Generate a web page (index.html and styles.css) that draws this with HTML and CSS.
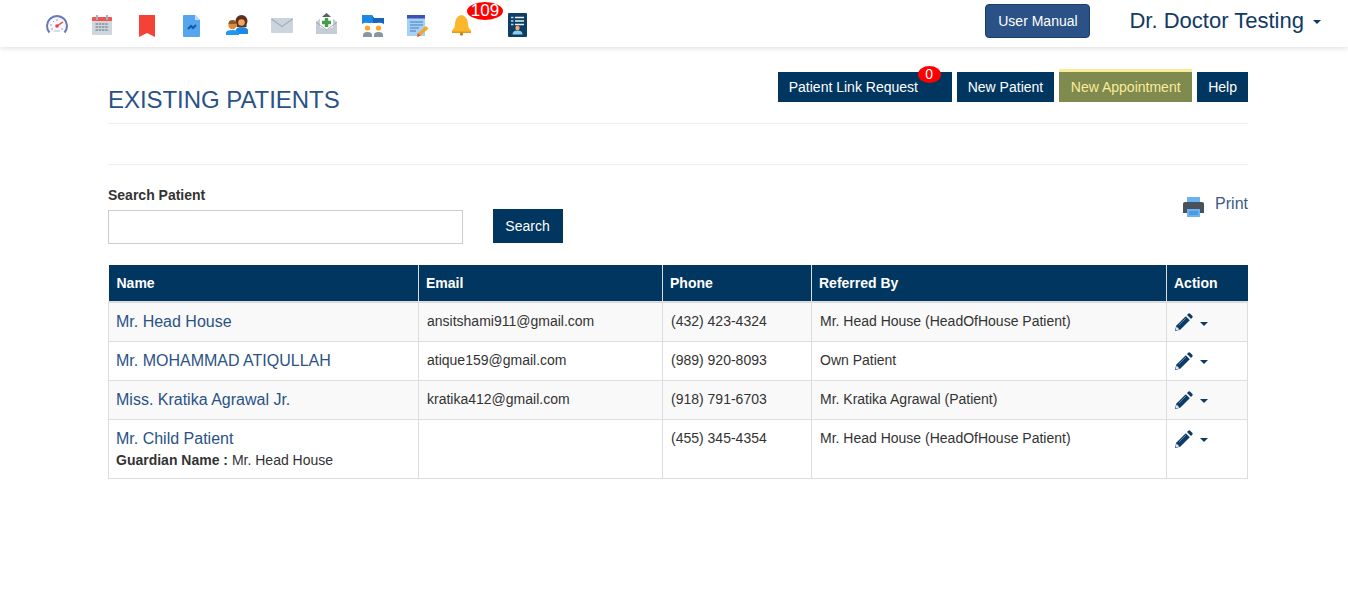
FILE: index.html
```html
<!DOCTYPE html>
<html lang="en">
<head>
<meta charset="utf-8">
<title>Existing Patients</title>
<link rel="stylesheet" href="styles.css">
</head>
<body>
<svg class="defs" width="0" height="0" aria-hidden="true">
  <symbol id="pen" viewBox="0 0 18 18">
    <path d="M0 18l1.200-5.200L10.800 3.200l4 4L5.200 16.800z" fill="#0d3a66"/>
    <path d="M1.500 13.500l3 3-3.800.8z" fill="#e8eef4"/>
    <path d="M3.800 12.200l7.400-7.400" stroke="#5f86aa" stroke-width="1" fill="none"/>
    <path d="M12 2l1.200-1.200q1-1 2 0l2 2q1 1 0 2L16 6z" fill="#0d3a66"/>
  </symbol>
</svg>
<header class="topbar">
  <nav class="icons">
    <a class="ic"><svg viewBox="0 0 24 24"><path d="M5 19a10 10 0 1 1 14 0z" fill="#f7f8fc"/><path d="M4.500 19.500a10 10 0 1 1 15 0" fill="none" stroke="#6a78b8" stroke-width="2"/><path d="M12 13l6-4" stroke="#e8404a" stroke-width="1.500"/><circle cx="12" cy="13" r="1.800" fill="#e8404a"/><path d="M6 16h2M16 16h2M5 12h2M12 6v2M8 8l1 1" stroke="#9aa3c4"/><path d="M9 18h6" stroke="#b8bfd6"/></svg></a>
    <a class="ic"><svg viewBox="0 0 24 24"><rect x="2" y="4" width="20" height="18" rx="1" fill="#cfd7de"/><path d="M2 5q0-1 1-1h18q1 0 1 1v3H2z" fill="#f0564e"/><rect x="6" y="2" width="2" height="5" fill="#a7b0b8"/><rect x="16" y="2" width="2" height="5" fill="#a7b0b8"/><path d="M5.500 11h13M5.500 14h13M5.500 17h13" stroke="#99a2ab" stroke-width="2" stroke-dasharray="2.500 .7"/></svg></a>
    <a class="ic"><svg viewBox="0 0 24 24"><path d="M4 2h16v22l-8-4-8 4z" fill="#f44336"/></svg></a>
    <a class="ic"><svg viewBox="0 0 24 24"><path d="M3 3q0-1 1-1h11l5 5v16q0 1-1 1H4q-1 0-1-1z" fill="#55a6ef"/><path d="M15 2l5 5h-5z" fill="#bbdefb"/><path d="M8 16l3-3 2 2 3-3" stroke="#1458b0" stroke-width="2" fill="none"/></svg></a>
    <a class="ic"><svg viewBox="0 0 24 24"><circle cx="16.500" cy="8" r="6" fill="#5d3020"/><path d="M11.500 14v-4h10v4z" fill="#5d3020"/><circle cx="16.500" cy="9.500" r="3.300" fill="#f2a65a"/><path d="M11 21v-4q0-3 5.500-3t6.500 3v4z" fill="#1e88e5"/><circle cx="7.500" cy="12" r="4.200" fill="#e08a3c"/><path d="M3.500 11q0-4 4-4t4 4z" fill="#8a5a2b"/><path d="M1 22v-2q0-3 6.500-3t6.500 3v2z" fill="#2196f3"/></svg></a>
    <a class="ic"><svg viewBox="0 0 24 24"><rect x="1" y="5" width="22" height="15" rx="1" fill="#ccd5dd"/><path d="M1.500 6l10.500 7.500L22.500 6" fill="none" stroke="#a3aeb8" stroke-width="1.300"/></svg></a>
    <a class="ic"><svg viewBox="0 0 24 24"><path d="M1 9l10.500-9L22 9v12H1z" fill="#c5ced6"/><path d="M5 4h13v10l-6.500 3L5 14z" fill="#fff"/><path d="M9.800 5h3.400v2.800H16v3.400h-2.800V14H9.800v-2.800H7V7.800h2.800z" fill="#43a047"/><path d="M1 9l10.500 8L22 9" fill="none" stroke="#8f9ba6" stroke-width=".8"/><path d="M11.500 0L7 4h9z" fill="#54626e"/></svg></a>
    <a class="ic"><svg viewBox="0 0 24 24"><path d="M2 2h10l2 3h10v8H2z" fill="#1e88e5"/><path d="M12 2l2 3h10v8H14z" fill="#1565c0"/><path d="M2 11q3-2 6-1h8q5-1 8 1v4H2z" fill="#fff"/><circle cx="7.500" cy="15" r="2.600" fill="#f9a825"/><circle cx="18.500" cy="15" r="2.600" fill="#f9a825"/><path d="M3 24v-2q0-3 4.500-3t4.500 3v2zM14 24v-2q0-3 4.500-3t4.500 3v2z" fill="#8497a3"/></svg></a>
    <a class="ic"><svg viewBox="0 0 24 24"><rect x="2" y="2" width="18" height="21" fill="#a4d2f7"/><rect x="2" y="2" width="18" height="3.500" fill="#3f51b5"/><path d="M5 9h13M5 12h13M5 15h9M5 18h6" stroke="#4a78bd"/><path d="M12 24l1-4 8-7 2.500 2.500-8 7z" fill="#f5a623"/><path d="M12 24l1-4 2.500 2.500z" fill="#e8504a"/></svg></a>
    <a class="ic bell"><svg viewBox="0 0 24 24"><path d="M11.500 2q5.500 1 6.300 7.500l.7 5 2.500 3V19H2v-1.500l2.500-3 .7-5Q6 3 11.500 2z" fill="#fbb72c"/><rect x="2" y="18.500" width="19" height="1.500" fill="#e59a1c"/><circle cx="11.500" cy="21" r="1.700" fill="#c9811a"/></svg><span class="bubble">109</span></a>
    <a class="ic last"><svg viewBox="0 0 24 24"><rect x="1" y="0" width="19" height="24" rx="1" fill="#0d3f66"/><path d="M8 4.500h9M8 8h9M8 11.500h9" stroke="#e9f1f6" stroke-width="1.500"/><path d="M4 4.500h2.500M4 8h2.500M4 11.500h2.500" stroke="#bcd8ea" stroke-width="1.500"/><circle cx="10.500" cy="15" r="2.200" fill="#f5a86a"/><path d="M5.500 21.500q0-4 5-4t5 4z" fill="#8ecbec"/></svg></a>
  </nav>
  <div class="top-right">
    <a class="manual">User Manual</a>
    <a class="user">Dr. Doctor Testing <span class="caret user-caret"></span></a>
  </div>
</header>

<main class="wrap">
  <div class="head">
    <h1>EXISTING PATIENTS</h1>
    <div class="actions">
      <a class="btn link-btn">Patient Link Request<span class="badge">0</span></a>
      <a class="btn">New Patient</a>
      <a class="btn appt">New Appointment</a>
      <a class="btn">Help</a>
    </div>
  </div>
  <div class="spacer"></div>

  <div class="tools">
    <div class="search-group">
      <label class="lbl" for="q">Search Patient</label>
      <input id="q" class="field" type="text">
    </div>
    <button class="search">Search</button>
    <a class="print">
      <svg viewBox="0 0 24 24" width="24" height="24"><rect x="5" y="1" width="13" height="7" fill="#6ab2f2"/><path d="M3 6h17q2 0 2 2v9H1V8q0-2 2-2z" fill="#47525c"/><rect x="5" y="13" width="13" height="8" fill="#6ab2f2"/><path d="M7 16h9M7 18h9" stroke="#2f7fd0"/></svg>
      <span>Print</span>
    </a>
  </div>

  <table class="grid">
    <colgroup><col class="c1"><col class="c2"><col class="c3"><col class="c4"><col class="c5"></colgroup>
    <thead><tr><th>Name</th><th>Email</th><th>Phone</th><th>Referred By</th><th>Action</th></tr></thead>
    <tbody>
      <tr class="odd"><td><a class="nm">Mr. Head House</a></td><td>ansitshami911@gmail.com</td><td>(432) 423-4324</td><td>Mr. Head House (HeadOfHouse Patient)</td><td><span class="act"><svg class="pen"><use href="#pen"/></svg><span class="caret"></span></span></td></tr>
      <tr><td><a class="nm">Mr. MOHAMMAD ATIQULLAH</a></td><td>atique159@gmail.com</td><td>(989) 920-8093</td><td>Own Patient</td><td><span class="act"><svg class="pen"><use href="#pen"/></svg><span class="caret"></span></span></td></tr>
      <tr class="odd"><td><a class="nm">Miss. Kratika Agrawal Jr.</a></td><td>kratika412@gmail.com</td><td>(918) 791-6703</td><td>Mr. Kratika Agrawal (Patient)</td><td><span class="act"><svg class="pen"><use href="#pen"/></svg><span class="caret"></span></span></td></tr>
      <tr><td><a class="nm">Mr. Child Patient</a><div class="guardian"><b>Guardian Name :</b> Mr. Head House</div></td><td></td><td>(455) 345-4354</td><td>Mr. Head House (HeadOfHouse Patient)</td><td><span class="act"><svg class="pen"><use href="#pen"/></svg><span class="caret"></span></span></td></tr>
    </tbody>
  </table>
</main>
</body>
</html>
```
FILE: styles.css
```css
* { box-sizing: border-box; }
html, body { margin: 0; padding: 0; }
body { font-family: "Liberation Sans", Arial, sans-serif; font-size: 14px; color: #333; background: #fff; height: 608px; overflow: hidden; }
.defs { display: block; height: 0; }

.topbar { height: 47px; display: flex; justify-content: space-between; align-items: center; padding: 0 27px 0 45px; background: #fff; box-shadow: 0 1px 6px rgba(0,0,0,.14); }
.icons { display: flex; gap: 21px; align-items: flex-start; height: 47px; padding-top: 13px; }
.ic { display: block; width: 24px; height: 24px; position: relative; }
.ic svg { display: block; width: 24px; height: 24px; }
.last { margin-left: 12px; }
.bubble { position: absolute; left: 17px; top: -11px; width: 36px; height: 18px; line-height: 18px; border-radius: 50%; background: #f00; color: #fff; font-size: 17px; text-align: center; }

.top-right { display: flex; align-items: center; gap: 39px; }
.manual { display: block; width: 105px; height: 34px; line-height: 32px; text-align: center; background: #2a5286; border: 1px solid #1b3d6b; border-radius: 4px; color: #fff; margin-top: -5px; }
.user { font-size: 22px; color: #123a63; margin-top: -5px; white-space: nowrap; }
.caret { display: inline-block; width: 0; height: 0; border-top: 4px solid #0d3a66; border-left: 4px solid transparent; border-right: 4px solid transparent; vertical-align: middle; }
.user-caret { margin-left: 3px; }

.wrap { width: 1140px; margin-left: 108px; }
.head { height: 77px; display: flex; justify-content: space-between; border-bottom: 1px solid #eee; }
h1 { margin: 39px 0 0; font-size: 24px; font-weight: 400; line-height: 28px; color: #2a5286; letter-spacing: -.05px; }
.actions { display: flex; gap: 5px; align-items: flex-start; padding-top: 25px; }
.btn { display: block; height: 30px; line-height: 30px; padding: 0 11px; background: #003660; color: #fff; position: relative; white-space: nowrap; }
.link-btn { width: 174px; }
.badge { position: absolute; left: 140px; top: -6px; width: 23px; height: 17px; line-height: 17px; border-radius: 50%; background: #f00; color: #fff; text-align: center; }
.appt { background: #7f8a4e; color: #fbeb9b; width: 133px; height: 33px; margin-top: -3px; border-top: 3px solid #fbeb9b; line-height: 30px; text-align: center; padding: 0; }
.spacer { height: 41px; border-bottom: 1px solid #eee; }

.tools { display: flex; height: 100px; align-items: flex-start; position: relative; }
.search-group { width: 355px; padding-top: 22px; }
.lbl { display: block; font-weight: 700; height: 23px; line-height: 17px; color: #333; }
.field { display: block; width: 355px; height: 34px; border: 1px solid #ccc; background: #fff; }
.search { width: 70px; height: 34px; margin: 44px 0 0 30px; padding: 0 1px 0 0; background: #003660; color: #fff; border: 0; font: 14px "Liberation Sans", Arial, sans-serif; }
.print { margin-left: auto; display: flex; gap: 9px; padding-top: 29px; color: #3b5a86; font-size: 16px; line-height: 20px; }
.print svg { margin-top: 2px; }

.grid { width: 1139px; table-layout: fixed; border-collapse: collapse; }
.c1 { width: 310px; } .c2 { width: 244px; } .c3 { width: 149px; } .c4 { width: 355px; } .c5 { width: 81px; }
th { height: 37px; background: #003660; color: #fff; text-align: left; font-weight: 700; padding: 0 8px 0 7px; border-right: 1px solid #ddd; border-bottom: 2px solid #ddd; }
th:first-child { padding-left: 8px; }
th:last-child { border-right: 0; }
td { vertical-align: top; padding: 8px 8px 0; border: 1px solid #ddd; height: 39px; line-height: 20px; }
td:first-child { padding-left: 7px; }
tr.odd td { background: #f9f9f9; }
tr:last-child td { height: 59px; }
.nm { font-size: 16px; color: #2a5286; line-height: 22px; display: block; }
.guardian { line-height: 20px; }
.act { display: flex; align-items: center; gap: 7px; height: 22px; }
.act .pen { display: block; width: 18px; height: 18px; }
.act .caret { margin-top: 3px; }
```
